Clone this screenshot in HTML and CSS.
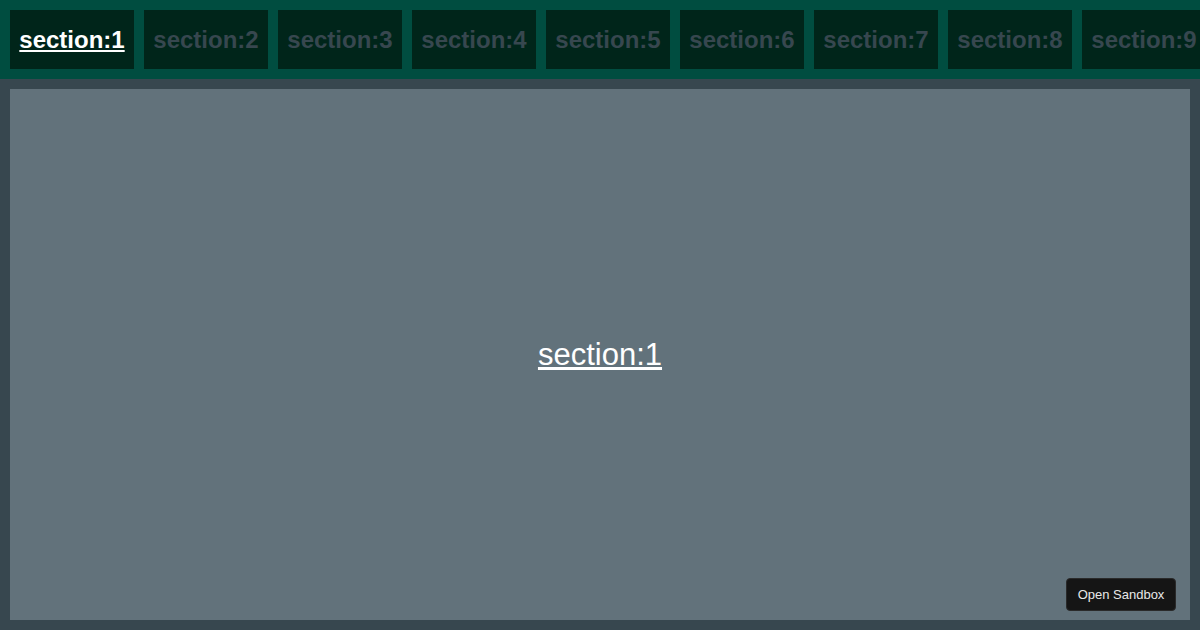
FILE: index.html
```html
<!DOCTYPE html>
<html lang="en">
<head>
<meta charset="utf-8">
<title>Sections</title>
<link rel="stylesheet" href="styles.css">
</head>
<body>
<nav class="tabs">
  <a class="tab active" href="#s1">section:1</a>
  <a class="tab" href="#s2">section:2</a>
  <a class="tab" href="#s3">section:3</a>
  <a class="tab" href="#s4">section:4</a>
  <a class="tab" href="#s5">section:5</a>
  <a class="tab" href="#s6">section:6</a>
  <a class="tab" href="#s7">section:7</a>
  <a class="tab" href="#s8">section:8</a>
  <a class="tab" href="#s9">section:9</a>
</nav>
<main class="stage">
  <section class="panel">
    <a class="panel-title" href="#s1">section:1</a>
  </section>
</main>
<button class="sandbox-btn">Open Sandbox</button>
</body>
</html>
```
FILE: styles.css
```css
html, body {
  margin: 0;
  padding: 0;
  width: 1200px;
  height: 630px;
  overflow: hidden;
  font-family: "Liberation Sans", Arial, sans-serif;
  background: #37474f;
}

.tabs {
  display: flex;
  gap: 10px;
  padding: 10px;
  height: 59px;
  background: #004d40;
  overflow: hidden;
}

.tab {
  flex-shrink: 0;
  display: flex;
  align-items: center;
  justify-content: center;
  width: 124px;
  height: 59px;
  background: #00251a;
  color: #37474f;
  font-size: 24px;
  font-weight: bold;
  text-decoration: none;
}

.tab.active {
  color: #ffffff;
  text-decoration: underline;
}

.stage {
  height: 551px;
  padding: 10px;
  box-sizing: border-box;
  display: flex;
}

.panel {
  flex: 1;
  display: flex;
  align-items: center;
  justify-content: center;
  background: #62727b;
}

.panel-title {
  color: #ffffff;
  font-size: 31px;
  text-decoration: underline;
}

.sandbox-btn {
  position: fixed;
  right: 24px;
  bottom: 19px;
  width: 110px;
  height: 33px;
  border: 1px solid #2a2a2a;
  border-radius: 4px;
  background: #151515;
  color: #e8e8e8;
  font-family: "Liberation Sans", Arial, sans-serif;
  font-size: 13px;
  padding: 0;
}
```
